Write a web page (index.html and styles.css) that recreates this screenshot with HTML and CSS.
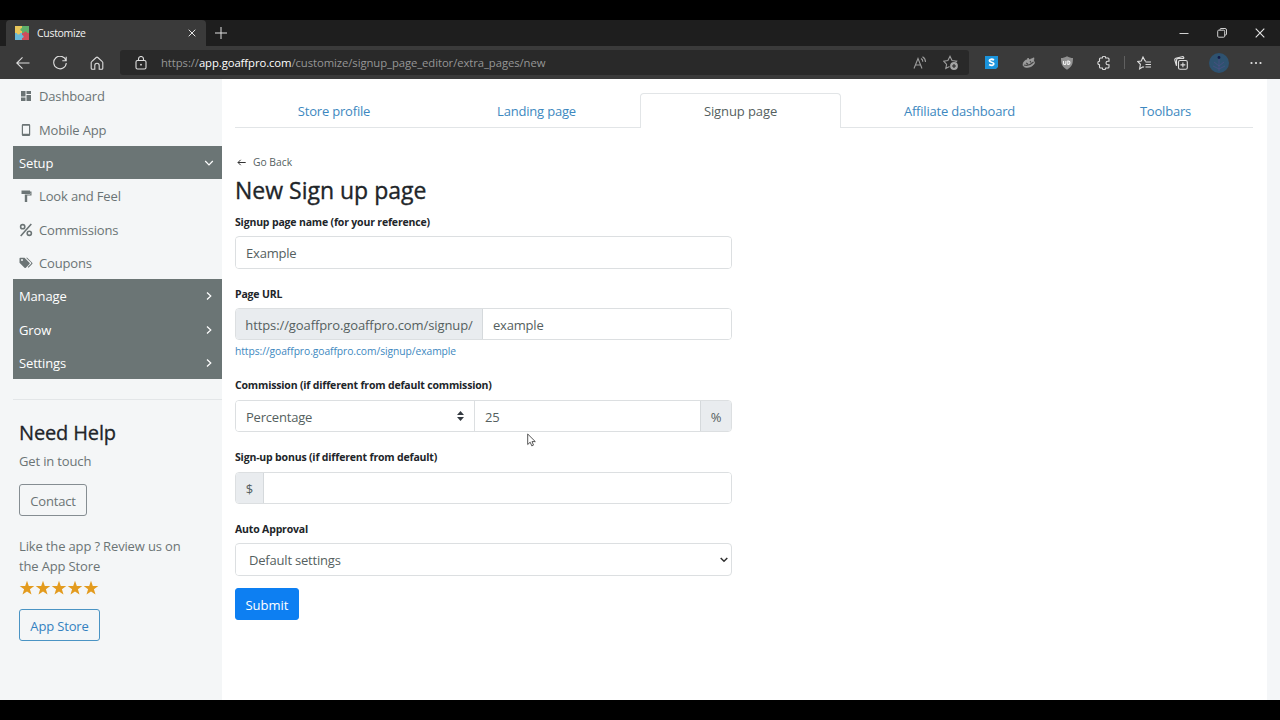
FILE: index.html
```html
<!DOCTYPE html>
<html lang="en">
<head>
    <meta charset="UTF-8">
    <title>Customize</title>
    <link rel="stylesheet" href="styles.css">
</head>
<body>
    <!-- Browser window -->
    <div class="tab-strip">
        <div class="browser-tab">
            <svg class="favicon" width="14" height="14" viewBox="0 0 14 14">
                <rect width="7" height="7" fill="#e8c65b"/>
                <rect x="7" width="7" height="7" fill="#5fae6b"/>
                <rect y="7" width="7" height="7" fill="#68b9d8"/>
                <rect x="7" y="7" width="7" height="7" fill="#cf4d5b"/>
                <circle cx="7" cy="3.5" r="1.6" fill="#5fae6b"/>
                <circle cx="3.5" cy="7" r="1.6" fill="#e8c65b"/>
                <circle cx="7" cy="10.5" r="1.6" fill="#68b9d8"/>
                <circle cx="10.5" cy="7" r="1.6" fill="#cf4d5b"/>
            </svg>
            <span class="tab-title">Customize</span>
            <svg width="8" height="8" viewBox="0 0 8 8"><path d="M.7.7l6.6 6.6M7.3.7L.7 7.3" stroke="#e6e6e6" fill="none"/></svg>
        </div>
        <svg class="new-tab" width="12" height="12" viewBox="0 0 12 12"><path d="M6 0v12M0 6h12" stroke="#e0e0e0" fill="none"/></svg>
        <div class="window-buttons">
            <svg width="10" height="10" viewBox="0 0 10 10"><path d="M.5 5.5h9" stroke="#d0d0d0" fill="none"/></svg>
            <svg width="10" height="10" viewBox="0 0 10 10"><path d="M3 2.2V1.5a1 1 0 0 1 1-1h4a1.5 1.5 0 0 1 1.5 1.5v4a1 1 0 0 1-1 1h-.7" stroke="#d0d0d0" fill="none"/><rect x=".7" y="2.2" width="7" height="7" rx="1" stroke="#d0d0d0" fill="none"/></svg>
            <svg width="10" height="10" viewBox="0 0 10 10"><path d="M.7.7l8.6 8.6M9.3.7L.7 9.3" stroke="#e6e6e6" stroke-width="1.1" fill="none"/></svg>
        </div>
    </div>

    <div class="toolbar">
        <div class="nav-buttons">
            <svg width="14" height="14" viewBox="0 0 14 14"><path d="M13.5 7H.8M6.5 1.3L.8 7l5.7 5.7"/></svg>
            <svg width="14" height="14" viewBox="0 0 14 14"><path d="M13 4.5A6.3 6.3 0 1 0 13.3 7M13.2.8v3.9H9.3"/></svg>
            <svg width="14" height="14" viewBox="0 0 14 14"><path d="M1.2 6.6q0-.6.5-1L6.200 1.500q.8-.7 1.600 0l4.500 4.100q.5.4.5 1v5.600q0 1-1 1H9.200V9.500a2.200 2.200 0 0 0-4.400 0v3.700H2.200q-1 0-1-1z"/></svg>
        </div>
        <div class="address-bar">
            <svg width="12" height="14" viewBox="0 0 12 14"><rect x="1" y="4.500" width="10" height="8.500" rx="1.500"/><path d="M3.500 4.500V3a2.500 2.500 0 0 1 5 0v1.500"/><circle class="dot" cx="6" cy="8.700" r=".9"/></svg>
            <span class="url">https://<b>app.goaffpro.com</b>/customize/signup_page_editor/extra_pages/new</span>
            <svg class="dim" width="14" height="14" viewBox="0 0 14 14"><path d="M1 12.500L5 2.500l4 10M2.500 9h5M8 2.500a3.500 3.500 0 0 1 1.800 3.300M9.500.8a6 6 0 0 1 3 5.200"/></svg>
            <svg class="dim star" width="15" height="15" viewBox="0 0 15 15"><path d="M6.500 11.500l-3.700 2 .8-4.200L.7 6.200l4.200-.6L7 1.300l2 4.300 4.600.6-1 1.100"/><circle class="badge" cx="11" cy="11" r="3.900"/><path class="plus" d="M11 9v4M9 11h4"/></svg>
        </div>
        <div class="extensions">
            <svg width="14" height="14" viewBox="0 0 14 14"><path d="M0 0h13v11l-2 2H0z" fill="#1b94dc" stroke="none"/><path d="M9 4C7 2.700 4.400 3.200 4.400 4.800c0 1.800 4.400 1.100 4.400 3 0 1.700-2.700 2-4.700.8" stroke="#fff" stroke-width="1.800"/></svg>
            <svg width="14" height="12" viewBox="0 0 14 12"><path d="M1 8c0-3 2-5 4-5l1-2 1.500 1.700L12 .8 11.500 4c2 1 1 3.500-2 5.200S1.500 11 1 8z" fill="#9b9b9b" stroke="#aaa" stroke-width=".6"/><path d="M2 8c3 1 7-.5 9.500-3M4 6l2 1M8 4l1 1.500" stroke="#454545"/></svg>
            <svg width="14" height="14" viewBox="0 0 14 14"><path d="M7 .3c2 1.200 4 1.700 6 1.800 0 5-.6 8.800-6 11.700C1.600 10.900 1 7.100 1 2.100 3 2 5 1.500 7 .3z" fill="#919191" stroke="none"/><path d="M3.500 5v2.200q0 1.300 1.200 1.300T5.900 7.200V5M7.800 5v3.500h.8a1.800 1.800 0 0 0 0-3.500z" stroke="#f4f4f4" stroke-width="1.100"/></svg>
            <svg width="14" height="14" viewBox="0 0 14 14"><path d="M3.500 2h1.800a1.700 1.700 0 0 1 3.400 0H11q1 0 1 1v2.200h-1.200a1.800 1.800 0 0 0 0 3.600H12V11q0 1-1 1H8.700a1.700 1.700 0 0 1-3.400 0H3.500q-1 0-1-1V8.700a1.700 1.700 0 0 1 0-3.400V3q0-1 1-1z"/></svg>
            <span class="divider"></span>
            <svg width="14" height="14" viewBox="0 0 14 14"><path d="M9 5L8 4.800 6 1 4.300 5 .7 5.500l2.700 2.800-.8 4.500L6 10.800l1 .5M8.500 6H14M8.500 8.500H14M8.500 11H14"/></svg>
            <svg width="14" height="14" viewBox="0 0 14 14"><rect x="4.500" y="4.500" width="8.800" height="8.800" rx="1.600"/><path d="M8.900 6.500v4.800M6.500 8.900h4.800M2.500 9.800L.8 4a1.500 1.500 0 0 1 1-1.700L8 .7q1.400-.3 1.800 1l.2.700M2.500 9.800V4.500q0-2 2-2H10"/></svg>
            <svg class="avatar" width="20" height="20" viewBox="0 0 20 20"><circle cx="10" cy="10" r="10" fill="#2e5270" stroke="none"/><path d="M10 4v14M5 9l5 4 5-4M4 13l6 3 6-3" stroke="#4b4f84" stroke-width=".8"/><circle cx="10" cy="4.500" r="1.400" fill="#131c48" stroke="none"/></svg>
            <svg width="14" height="14" viewBox="0 0 14 14"><g class="dots"><circle cx="2.500" cy="7" r="1.100"/><circle cx="7" cy="7" r="1.100"/><circle cx="11.500" cy="7" r="1.100"/></g></svg>
        </div>
    </div>

    <div class="page">
        <aside class="sidebar">
            <nav>
                <a class="nav-item">
                    <svg width="14" height="14" viewBox="0 0 14 14"><path d="M2 2h4.500v5.500H2zM7.500 2H12v3H7.500zM2 8.500h4.500V12H2zM7.500 6H12v6H7.500z"/></svg>
                    Dashboard
                </a>
                <a class="nav-item">
                    <svg width="14" height="14" viewBox="0 0 14 14"><path fill-rule="evenodd" d="M4 1h6q1.200 0 1.200 1.200v9.600Q11.200 13 10 13H4q-1.200 0-1.200-1.200V2.200Q2.800 1 4 1zM4 2.800v7.900h6V2.800z"/></svg>
                    Mobile App
                </a>
                <a class="nav-group">Setup <svg width="10" height="10" viewBox="0 0 10 10"><path d="M1.200 3L5 6.800 8.800 3"/></svg></a>
                <a class="nav-item">
                    <svg width="14" height="14" viewBox="0 0 14 14"><path d="M2.500 1.500H11v1h1.500v4H8.200V13H5.800V5.500h5.500V3.700H11V5H2.500z"/></svg>
                    Look and Feel
                </a>
                <a class="nav-item">
                    <svg width="14" height="14" viewBox="0 0 14 14"><g class="percent"><circle cx="3.700" cy="3.700" r="2.100"/><circle cx="10.300" cy="10.300" r="2.100"/><path d="M12.300 1L1.700 13"/></g></svg>
                    Commissions
                </a>
                <a class="nav-item">
                    <svg width="14" height="14" viewBox="0 0 14 14"><path fill-rule="evenodd" d="M.5 2.500q0-.8.800-.8h4.200l5 5q.7.700 0 1.400l-3.600 3.600q-.7.700-1.400 0l-5-5zM3 3a1 1 0 1 0 0 2 1 1 0 0 0 0-2zM7 1.700h1.200l5 5q.7.700 0 1.400l-3.700 3.700-.8-.7 3.300-3.300q.6-.5 0-1.200z"/></svg>
                    Coupons
                </a>
                <a class="nav-group">Manage <svg width="10" height="10" viewBox="0 0 10 10"><path d="M3 1.500L6.800 5 3 8.500"/></svg></a>
                <a class="nav-group">Grow <svg width="10" height="10" viewBox="0 0 10 10"><path d="M3 1.500L6.800 5 3 8.500"/></svg></a>
                <a class="nav-group">Settings <svg width="10" height="10" viewBox="0 0 10 10"><path d="M3 1.500L6.800 5 3 8.500"/></svg></a>
            </nav>
            <div class="help">
                <h4>Need Help</h4>
                <p class="touch">Get in touch</p>
                <button class="btn btn-outline">Contact</button>
                <p class="review">Like the app ? Review us on<br>the App Store</p>
                <div class="stars">
                    <svg width="80" height="16" viewBox="0 0 80 16">
                        <defs><path id="star" d="M8 .8l1.800 5.100 5.500.1-4.400 3.300 1.600 5.200L8 11.400l-4.500 3.100 1.600-5.200L.7 6l5.500-.1z"/></defs>
                        <use href="#star"/><use href="#star" x="16"/><use href="#star" x="32"/><use href="#star" x="48"/><use href="#star" x="64"/>
                    </svg>
                </div>
                <button class="btn btn-outline-blue">App Store</button>
            </div>
        </aside>

        <main>
            <div class="tabs">
                <a>Store profile</a>
                <a>Landing page</a>
                <a class="active">Signup page</a>
                <a>Affiliate dashboard</a>
                <a>Toolbars</a>
            </div>

            <form>
                <a class="back">
                    <svg width="9" height="8" viewBox="0 0 9 8"><path d="M8.700 4.500H1M3.700 1.800L1 4.500l2.700 2.700" fill="none" stroke="#333"/></svg>
                    Go Back
                </a>
                <h1>New Sign up page</h1>

                <label class="l-name">Signup page name (for your reference)</label>
                <div class="field field-name">
                    <input type="text" value="Example">
                </div>

                <label class="l-url">Page URL</label>
                <div class="field">
                    <span class="addon prefix">https://goaffpro.goaffpro.com/signup/</span>
                    <input type="text" value="example">
                </div>
                <a class="link">https://goaffpro.goaffpro.com/signup/example</a>

                <label class="l-commission">Commission (if different from default commission)</label>
                <div class="field">
                    <div class="type-select">
                        <select><option>Percentage</option></select>
                        <svg width="7" height="10" viewBox="0 0 7 10"><path d="M0 4l3.500-4L7 4zM0 6l3.500 4L7 6z" fill="#343a40"/></svg>
                    </div>
                    <input type="text" value="25">
                    <span class="addon suffix">%</span>
                </div>

                <label class="l-bonus">Sign-up bonus (if different from default)</label>
                <div class="field">
                    <span class="addon currency">$</span>
                    <input type="text">
                </div>

                <label class="l-approval">Auto Approval</label>
                <div class="field approval">
                    <select><option>Default settings</option></select>
                    <svg width="8" height="6" viewBox="0 0 8 6"><path d="M.7 1L4 4.300 7.300 1" fill="none" stroke="#333" stroke-width="1.500"/></svg>
                </div>

                <button type="button" class="btn btn-primary">Submit</button>
            </form>
        </main>
        <div class="gutter"></div>
    </div>

    <svg class="cursor" width="9" height="14" viewBox="0 0 9 14"><path d="M.7 1v10.500l2.500-2.300 1.600 3.700 1.700-.8L5 8.600h3.300z" fill="#fff" stroke="#444" stroke-width=".9"/></svg>
</body>
</html>
```
FILE: styles.css
```css
* {
    box-sizing: border-box;
}

body {
    margin: 0;
    padding: 20px 0;
    width: 1280px;
    height: 720px;
    overflow: hidden;
    background: #000;
    font-family: "Open Sans", "Noto Sans", sans-serif;
    font-size: 13px;
    letter-spacing: -0.15px;
    color: #6b7475;
}

svg {
    display: block;
    flex-shrink: 0;
}

p, h1, h4 {
    margin: 0;
}

/* browser window */
.tab-strip {
    display: flex;
    align-items: center;
    height: 26px;
    padding-left: 6px;
    background: #1e1e1e;
}

.browser-tab {
    display: flex;
    align-items: center;
    width: 200px;
    height: 26px;
    padding: 0 10px 0 9px;
    background: #3a3a3a;
    border-radius: 4px 4px 0 0;
}

.tab-title {
    flex: 1;
    margin-left: 8px;
    font-size: 10.5px;
    letter-spacing: -0.4px;
    color: #f2f2f2;
}

.tab-title {
    letter-spacing: -0.3px;
}

.new-tab {
    margin-left: 9px;
}

.window-buttons {
    display: flex;
    gap: 28px;
    margin-left: auto;
    padding-right: 15px;
}

.toolbar {
    display: flex;
    align-items: center;
    height: 33px;
    background: #3a3a3a;
}

.toolbar svg {
    fill: none;
    stroke: #dedede;
    stroke-width: 1.1;
}

.nav-buttons {
    display: flex;
    gap: 23px;
    width: 120px;
    padding-left: 16px;
}

.address-bar {
    display: flex;
    align-items: center;
    width: 849px;
    height: 25px;
    padding: 0 11px 0 15px;
    background: #292929;
    border-radius: 3px;
}

.url {
    flex: 1;
    margin-left: 14px;
    font-size: 11.3px;
    letter-spacing: -0.08px;
    color: #969696;
}

.url b {
    font-weight: normal;
    color: #fff;
}

.address-bar .dot,
.address-bar .badge {
    fill: #dedede;
    stroke: none;
}

.address-bar .dim {
    stroke: #9c9c9c;
}

.address-bar .badge {
    fill: #a5a5a5;
}

.address-bar .plus {
    stroke: #292929;
}

.address-bar .star {
    margin-left: 16px;
}

.extensions {
    flex: 1;
    display: flex;
    align-items: center;
    justify-content: space-between;
    padding: 0 17px 0 16px;
}

.extensions .dots {
    fill: #e3e3e3;
    stroke: none;
}

.divider {
    width: 1px;
    height: 13px;
    margin: 0 -11px;
    background: #606060;
}

.extensions .avatar {
    margin: 0 -3px;
}

/* page */
.page {
    display: flex;
    height: 621px;
    background: #fff;
}

.sidebar {
    width: 222px;
    padding-left: 13px;
    background: #f4f6f7;
}

nav {
    padding-bottom: 20px;
    border-bottom: 1px solid #e3e6e8;
}

.nav-item,
.nav-group {
    display: flex;
    align-items: center;
    height: 33.35px;
    padding: 1px 8px 0 6px;
}

.nav-item svg {
    margin-right: 6px;
    fill: #6b7475;
}

.nav-item .percent {
    fill: none;
    stroke: #6b7475;
    stroke-width: 1.6;
}

.nav-group {
    justify-content: space-between;
    color: #fff;
    background: #6b7575;
}

.nav-group path {
    fill: none;
    stroke: #fff;
    stroke-width: 1.2;
}

.help {
    padding: 20px 0 0 6px;
}

.help h4 {
    font-size: 20px;
    font-weight: 500;
    line-height: 26px;
    -webkit-text-stroke: 0.3px #212529;
    color: #212529;
}

.touch {
    margin: 5px 0 13px;
    line-height: 20px;
}

.review {
    margin-top: 20px;
    line-height: 20px;
}

.stars {
    margin: 4px 0 13px;
}

.stars svg {
    fill: #e39b1e;
}

.btn {
    display: block;
    height: 32px;
    padding: 1px 0 0;
    border: 1px solid;
    border-radius: 3px;
    background: transparent;
    font: inherit;
    letter-spacing: inherit;
}

.btn-outline {
    width: 68px;
    color: #6b7475;
    border-color: #858d92;
}

.btn-outline-blue {
    width: 81px;
    color: #3381c0;
    border-color: #4a94c4;
}

.btn-primary {
    width: 64px;
    margin-top: 12px;
    letter-spacing: 0;
    color: #fff;
    border-color: #0d7ff2;
    background: #0d7ff2;
}

main {
    flex: 1;
    padding: 14px 14px 0 13px;
}

.gutter {
    width: 13px;
    background: #f4f6f8;
}

.tabs {
    display: grid;
    grid-template-columns: 198fr 207fr 201fr 237fr 175fr;
    height: 35px;
    border-bottom: 1px solid #e2e5e7;
    color: #3d88c0;
    letter-spacing: -0.2px;
}

.tabs a {
    display: flex;
    align-items: center;
    justify-content: center;
    height: 35px;
}

.tabs .active {
    color: #555f5f;
    letter-spacing: -0.1px;
    background: #fff;
    border: 1px solid #e2e5e7;
    border-bottom: 0;
    border-radius: 4px 4px 0 0;
}

form {
    width: 497px;
    padding-top: 26px;
}

.back {
    display: flex;
    align-items: center;
    gap: 7px;
    height: 16px;
    padding-left: 2px;
    font-size: 10.3px;
    letter-spacing: 0;
    color: #555f5f;
}

h1 {
    margin-top: 5px;
    font-size: 23px;
    font-weight: 500;
    line-height: 30px;
    letter-spacing: 0;
    -webkit-text-stroke: 0.35px #212529;
    color: #212529;
}

label {
    display: block;
    height: 16px;
    line-height: 16px;
    font-size: 10.5px;
    font-weight: bold;
    letter-spacing: -0.17px;
    color: #212529;
}

.l-name {
    margin: 9px 0 6px;
}

.l-url {
    margin: 17px 0 6px;
}

.l-commission {
    margin: 17px 0 7px;
}

.l-bonus,
.l-approval {
    margin: 17px 0 7px;
}

.l-approval {
    margin-bottom: 6px;
}

.field {
    display: flex;
    align-items: center;
    height: 32px;
    border: 1px solid #dcdfe1;
    border-radius: 4px;
    color: #555f60;
    overflow: hidden;
}

.field-name {
    height: 33px;
}

input,
select {
    flex: 1;
    min-width: 0;
    height: 30px;
    padding: 1px 10px 0;
    border: 0;
    background: #fff;
    color: #555f60;
    font: inherit;
    letter-spacing: -0.2px;
    appearance: none;
}

.addon {
    display: flex;
    align-items: center;
    justify-content: center;
    height: 30px;
    padding-top: 2px;
    background: #e9ecef;
    border-right: 1px solid #d5d9dc;
}

.prefix {
    width: 247px;
    letter-spacing: -0.1px;
}

.suffix {
    width: 31px;
    border-right: 0;
    border-left: 1px solid #d5d9dc;
}

.currency {
    width: 28px;
}

.type-select {
    display: flex;
    align-items: center;
    width: 239px;
    height: 30px;
    padding-right: 10px;
    border-right: 1px solid #dcdfe1;
}

.link {
    display: block;
    height: 20px;
    padding-top: 3px;
    font-size: 10.3px;
    line-height: 17px;
    letter-spacing: -0.07px;
    color: #3d88c0;
}

.approval {
    height: 33px;
    padding-right: 3px;
}

.approval select {
    padding-left: 13px;
}

.cursor {
    position: absolute;
    left: 527px;
    top: 433px;
}
```
